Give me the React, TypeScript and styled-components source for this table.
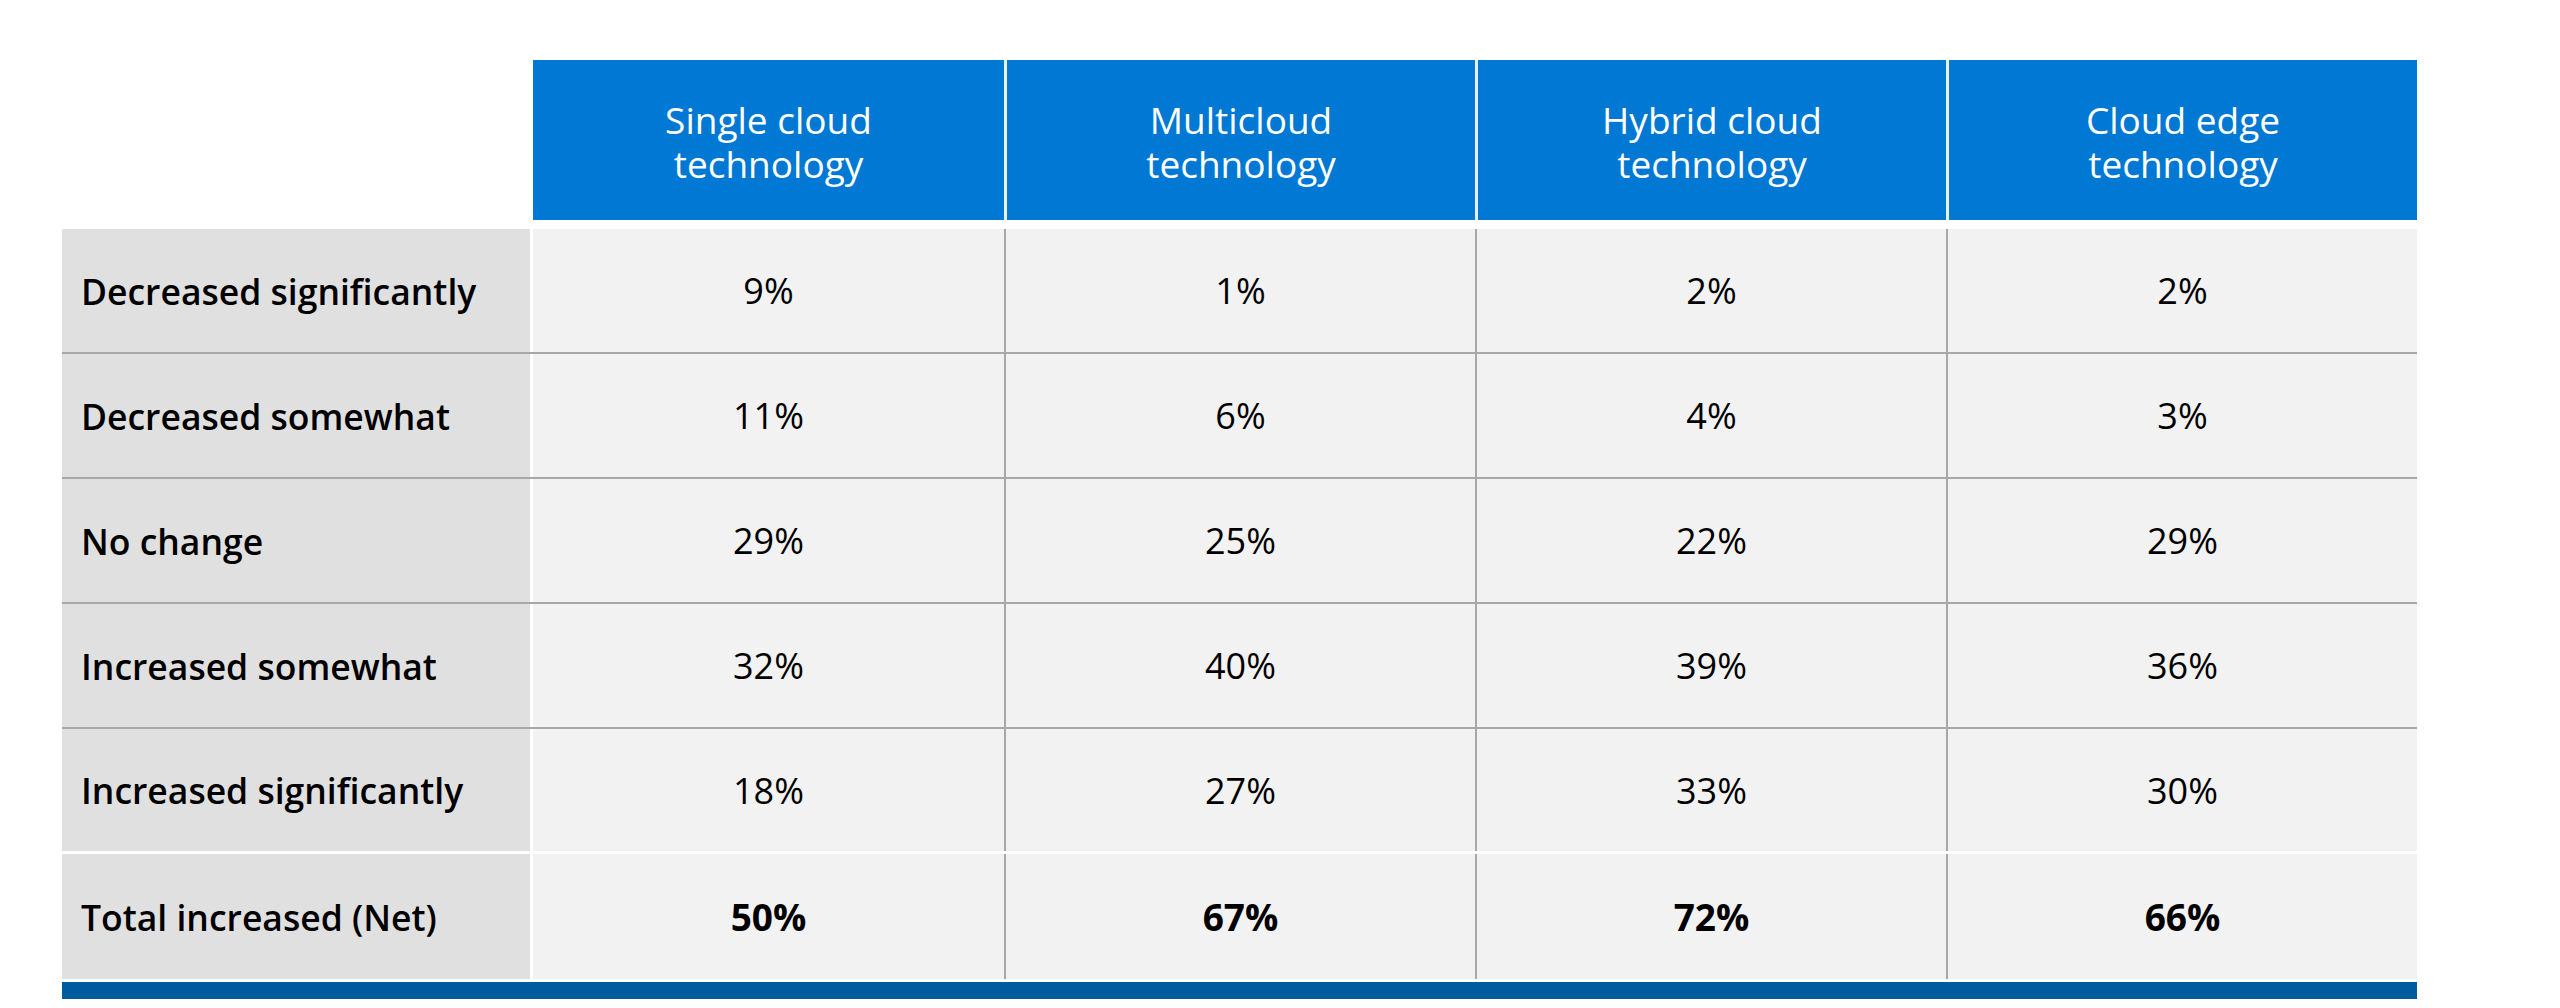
import React from 'react';
import styled, {createGlobalStyle} from "styled-components";

type RowType = {
    label: string
    values: Array<string>
    total?: boolean
}

const columns = [
    ["Single cloud", "technology"],
    ["Multicloud", "technology"],
    ["Hybrid cloud", "technology"],
    ["Cloud edge", "technology"],
]

const rows: Array<RowType> = [
    {label: "Decreased significantly", values: ["9%", "1%", "2%", "2%"]},
    {label: "Decreased somewhat", values: ["11%", "6%", "4%", "3%"]},
    {label: "No change", values: ["29%", "25%", "22%", "29%"]},
    {label: "Increased somewhat", values: ["32%", "40%", "39%", "36%"]},
    {label: "Increased significantly", values: ["18%", "27%", "33%", "30%"]},
    {label: "Total increased (Net)", values: ["50%", "67%", "72%", "66%"], total: true},
]

export default function App() {
    return (
        <>
            <GlobalStyle/>
            <Page>
                <Table>
                    <HeaderRow>
                        <EmptyCell/>
                        {columns.map((c, i) => (
                            <HeaderCell key={i} first={i === 0}>
                                <HeaderLine>{c[0]}</HeaderLine>
                                <HeaderLine>{c[1]}</HeaderLine>
                            </HeaderCell>
                        ))}
                    </HeaderRow>
                    {rows.map((r, i) => (
                        <BodyRow key={r.label} edge={i === rows.length - 2 ? "white" : i === rows.length - 1 ? "none" : "gray"}>
                            <LabelCell>{r.label}</LabelCell>
                            {r.values.map((v, j) => (
                                <DataCell key={j} first={j === 0} bold={r.total}>{v}</DataCell>
                            ))}
                        </BodyRow>
                    ))}
                    <BottomBar/>
                </Table>
            </Page>
        </>
    );
}

const GlobalStyle = createGlobalStyle`
  body {
    margin: 0;
    background: #ffffff;
    font-family: "Open Sans", "Noto Sans", sans-serif;
    color: #000;
  }
`

const Page = styled.div`
  width: 2560px;
  height: 1008px;
  padding: 60px 0 0 62px;
  box-sizing: border-box;
  overflow: hidden;
`

const Table = styled.div`
  width: 2355px;
  display: flex;
  flex-direction: column;
`

const HeaderRow = styled.div`
  display: grid;
  grid-template-columns: 471px repeat(4, 1fr);
  height: 160px;
  margin-bottom: 9px;
`

const EmptyCell = styled.div``

const HeaderCell = styled.div<{ first?: boolean }>`
  background: #0078d4;
  color: #ffffff;
  display: flex;
  flex-direction: column;
  align-items: center;
  justify-content: center;
  font-size: 37px;
  padding-top: 4px;
  border-left: ${props => props.first ? "none" : "3px solid #e6f1fb"};
`

const HeaderLine = styled.span`
  display: block;
  height: 44px;
  line-height: 44px;
`

const BodyRow = styled.div<{ edge: "gray" | "white" | "none" }>`
  display: grid;
  grid-template-columns: 471px repeat(4, 1fr);
  height: ${props => props.edge === "none" ? "125px" : "125px"};
  box-sizing: border-box;
  border-bottom: ${props => props.edge === "gray" ? "2px solid #a8a8a8"
          : props.edge === "white" ? "3px solid #ffffff" : "none"};
`

const LabelCell = styled.div`
  background: #e0e0e0;
  border-right: 3px solid #ffffff;
  display: flex;
  align-items: center;
  padding-left: 19px;
  font-size: 35.5px;
  font-weight: 600;
`

const DataCell = styled.div<{ first?: boolean, bold?: boolean }>`
  background: #f2f2f2;
  display: flex;
  align-items: center;
  justify-content: center;
  font-size: ${props => props.bold ? "37px" : "36px"};
  font-weight: ${props => props.bold ? 700 : 400};
  border-left: ${props => props.first ? "none" : "2px solid #a8a8a8"};
`

const BottomBar = styled.div`
  height: 17px;
  margin-top: 3px;
  background: #005a9e;
`
